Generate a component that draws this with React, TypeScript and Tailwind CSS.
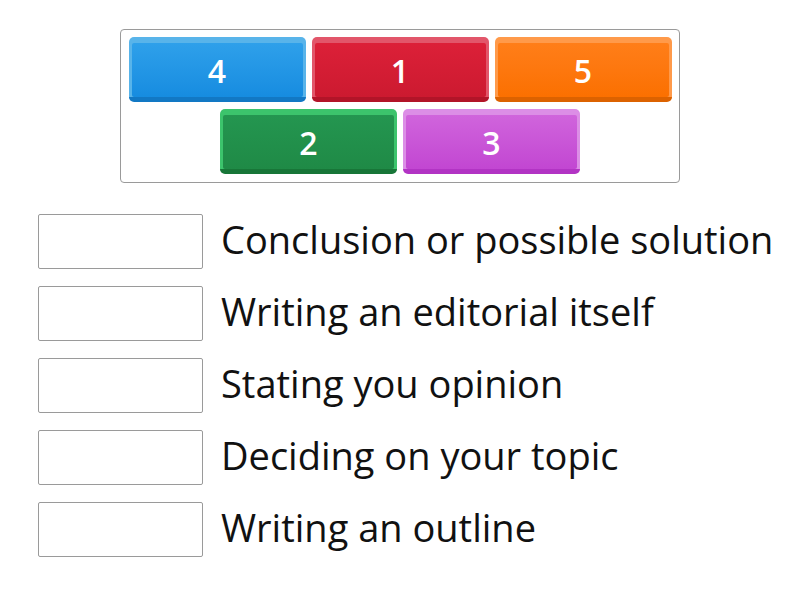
const TILES = [
  { n: 4, edge: "bg-[#58b4ea]", face: "bg-gradient-to-b from-[#2ea0ea] to-[#168ce0]", bottom: "border-b-[#1278c4]" },
  { n: 1, edge: "bg-[#e2566a]", face: "bg-gradient-to-b from-[#dc2038] to-[#cc1a30]", bottom: "border-b-[#b21428]" },
  { n: 5, edge: "bg-[#ff9a4a]", face: "bg-gradient-to-b from-[#ff7e18] to-[#fb7000]", bottom: "border-b-[#dc6200]" },
  { n: 2, edge: "bg-[#3cc46c]", face: "bg-gradient-to-b from-[#249650] to-[#1f8a46]", bottom: "border-b-[#187638]" },
  { n: 3, edge: "bg-[#dc8ee6]", face: "bg-gradient-to-b from-[#d064dc] to-[#c246d2]", bottom: "border-b-[#b234c4]" },
];

const ROWS = [
  "Conclusion or possible solution",
  "Writing an editorial itself",
  "Stating you opinion",
  "Deciding on your topic",
  "Writing an outline",
];

function Tile({ t }: { t: (typeof TILES)[number] }) {
  return (
    <div className={`w-[177px] h-[65px] rounded-[5px] ${t.edge} border-b-[5px] ${t.bottom} pt-[6px] px-[3px] flex`}>
      <div className={`flex-1 rounded-[2px] ${t.face} flex items-center justify-center text-white text-[32px] font-semibold leading-none pt-[1px]`}>
        {t.n}
      </div>
    </div>
  );
}

export default function App() {
  return (
    <div className="w-[800px] h-[600px] bg-white font-['Open_Sans',sans-serif] pt-[29px]">
      <div className="mx-auto w-[560px] border border-[#9a9a9a] rounded-[4px] px-[7px] pt-[7px] pb-[8px] flex flex-wrap justify-center gap-x-[6px] gap-y-[7px]">
        {TILES.map((t) => (
          <Tile key={t.n} t={t} />
        ))}
      </div>

      <div className="mt-[31px] pl-[38px] flex flex-col gap-[17px]">
        {ROWS.map((r) => (
          <div key={r} className="flex items-center gap-[18px]">
            <div className="w-[165px] h-[55px] border border-[#9a9a9a] rounded-[2px] shrink-0" />
            <span className="text-[38px] text-[#111] leading-none pb-[6px]">{r}</span>
          </div>
        ))}
      </div>
    </div>
  );
}
